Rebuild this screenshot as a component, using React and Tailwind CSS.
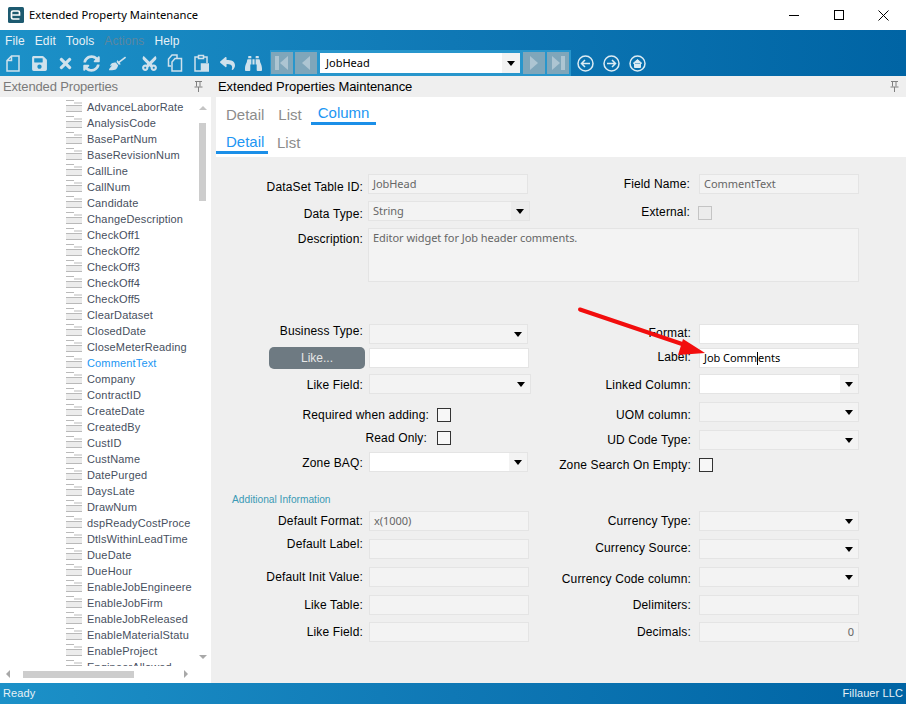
import React from "react";
import { FaSave, FaTimes, FaSyncAlt, FaBroom, FaCut, FaReply, FaBinoculars } from "react-icons/fa";

const TREE_ITEMS = [
  "AdvanceLaborRate", "AnalysisCode", "BasePartNum", "BaseRevisionNum", "CallLine", "CallNum",
  "Candidate", "ChangeDescription", "CheckOff1", "CheckOff2", "CheckOff3", "CheckOff4", "CheckOff5",
  "ClearDataset", "ClosedDate", "CloseMeterReading", "CommentText", "Company", "ContractID",
  "CreateDate", "CreatedBy", "CustID", "CustName", "DatePurged", "DaysLate", "DrawNum",
  "dspReadyCostProce", "DtlsWithinLeadTime", "DueDate", "DueHour", "EnableJobEngineere",
  "EnableJobFirm", "EnableJobReleased", "EnableMaterialStatu", "EnableProject", "EngineerAllowed",
];

const TOOL_TEXT = "font-['Liberation_Sans',Arial,sans-serif]";

function Pin() {
  return (
    <svg width="9" height="11" viewBox="0 0 9 11" fill="none" stroke="#808080" strokeWidth="1">
      <path d="M1 .5h7M2.5 .5v5M6 .5v5M.5 6h8M4.5 6v5" />
    </svg>
  );
}

function NewIcon() {
  return (
    <svg width="14" height="17" viewBox="0 0 14 17" fill="none" stroke="#cfe1ec" strokeWidth="1.5">
      <path d="M5.5 1H13v15H1V5.5zM5.5 1v4.5H1" />
    </svg>
  );
}

function CopyIcon() {
  return (
    <svg width="16" height="18" viewBox="0 0 16 18" fill="none" stroke="#cfe1ec" strokeWidth="1.5">
      <path d="M4 12H1.500V5L5 1h5v3" />
      <path d="M8 4.500h6.500v12.500H5V8z" />
    </svg>
  );
}

function PasteIcon() {
  return (
    <svg width="15" height="18" viewBox="0 0 15 18" fill="none" stroke="#cfe1ec" strokeWidth="1.500">
      <path d="M5 3H1v14h6M10 3h3v6" />
      <path d="M4.500 1.500h5v3h-5z" />
      <path d="M7.500 10h7v7h-7z" fill="#cfe1ec" />
    </svg>
  );
}

function ToolIcon({ children, className = "" }) {
  return <div className={`w-[26px] h-[26px] flex items-center justify-center text-[#cfe1ec] ${className}`}>{children}</div>;
}

function NavButton({ dir, end }) {
  return (
    <div className="w-[22px] h-[22px] bg-[#7fa6ba] flex items-center justify-center">
      <svg width="16" height="16" viewBox="0 0 16 16" fill="#adc5d2">
        {dir === "left" ? (
          <>
            {end && <rect x="1" y="1" width="4" height="14" />}
            <path d={end ? "M14 1v14L6 8z" : "M12 1v14L4 8z"} />
          </>
        ) : (
          <>
            {end && <rect x="11" y="1" width="4" height="14" />}
            <path d={end ? "M2 1v14l8-7z" : "M4 1v14l8-7z"} />
          </>
        )}
      </svg>
    </div>
  );
}

function CircleIcon({ kind }) {
  return (
    <div className="w-[26px] h-[26px] flex items-center justify-center">
      <svg width="17" height="17" viewBox="0 0 17 17" fill="none" stroke="#dcebf3" strokeWidth="1.500">
        <circle cx="8.500" cy="8.500" r="7.500" />
        {kind === "left" && <path d="M13 8.500H4.500M8 5L4.500 8.500 8 12" />}
        {kind === "right" && <path d="M4 8.500h8.500M9 5l3.500 3.500L9 12" />}
        {kind === "home" && <path d="M4 8.500l4.500-4 4.500 4M5.500 8v4.500h6V8" fill="#dcebf3" strokeWidth="1" />}
      </svg>
    </div>
  );
}

function TreeIcon() {
  return (
    <svg width="16" height="12" viewBox="0 0 16 12" className="shrink-0 mb-[2px]">
      <rect x="0" y="5" width="16" height="7" fill="#ececec" />
      <path d="M0 .5h8M8 3h8M0 5.500h16M0 11.500h16" stroke="#b9b9b9" strokeWidth="1" />
    </svg>
  );
}

function Caret() {
  return <span className="inline-block w-0 h-0 border-x-[4px] border-x-transparent border-t-[5px] border-t-black" />;
}

// single line box, used for textboxes and combos
function Box({ value, enabled, combo, btn, right, w = "w-[160px]", className = "", children }) {
  return (
    <div
      className={`${w} h-5 flex items-center border border-[#e4e4e4] ${enabled ? "bg-white text-black" : "bg-[#f3f3f3] text-[#666]"} ${className}`}
    >
      <span className={`flex-1 px-1 font-['Noto_Sans',sans-serif] text-[11px] tracking-[-0.05px] whitespace-nowrap overflow-hidden ${right ? "text-right" : ""}`}>
        {children || value}
      </span>
      {combo && (
        <span className={`w-[18px] h-full flex items-center justify-center ${btn ? (enabled ? "bg-[#f3f3f3]" : "bg-[#ececec]") : ""}`}>
          <Caret />
        </span>
      )}
    </div>
  );
}

function Row({ label, labelW = "w-[147px]", labelClass = "", gap = "ml-[5px]", className = "", control }) {
  return (
    <div className={`flex items-center ${className}`}>
      <div className={`${labelW} h-5 flex items-center justify-end text-[12px] tracking-[0.15px] text-black whitespace-nowrap ${labelClass}`}>{label}</div>
      <div className={gap}>{control}</div>
    </div>
  );
}

function Check({ muted }) {
  return <div className={`w-[14px] h-[14px] border ${muted ? "border-[#c4c4c4] bg-[#ececec]" : "border-[#333] bg-[#f7f7f7]"}`} />;
}

export default function App() {
  return (
    <div className={`w-[906px] h-[704px] relative overflow-hidden flex flex-col bg-[#efefef] ${TOOL_TEXT}`}>
      {/* title bar */}
      <div className="h-[30px] bg-white flex items-center shrink-0">
        <svg width="16" height="16" viewBox="0 0 16 16" className="ml-2 shrink-0">
          <rect width="16" height="16" rx="1.500" fill="#1d5a70" />
          <path d="M4.500 8h7V5.500q0-1.500-1.500-1.500H5q-1.500 0-1.500 1.500v5q0 1.500 1.500 1.500h6.500" fill="none" stroke="#fff" strokeWidth="1.700" />
        </svg>
        <span className="ml-[5px] text-[11.2px] text-black font-['Noto_Sans',sans-serif]">Extended Property Maintenance</span>
        <div className="ml-auto flex">
          <div className="w-[45px] h-[30px] flex items-center justify-center">
            <div className="w-[10px] h-px bg-black" />
          </div>
          <div className="w-[45px] h-[30px] flex items-center justify-center">
            <div className="w-[10px] h-[10px] border border-black" />
          </div>
          <div className="w-[45px] h-[30px] flex items-center justify-center">
            <svg width="11" height="11" viewBox="0 0 11 11" stroke="#000" strokeWidth="1">
              <path d="M.5 .5l10 10M10.500 .5l-10 10" />
            </svg>
          </div>
        </div>
      </div>

      {/* menu + toolbar */}
      <div className="h-[46px] shrink-0 bg-gradient-to-r from-[#1c91c8] via-[#0f78b5] to-[#0064a4]">
        <div className="h-5 pt-[2px] flex items-center gap-[10px] pl-[5px] text-[12px] tracking-[0.1px] text-[#e8f1f6]">
          <span>File</span>
          <span>Edit</span>
          <span>Tools</span>
          <span className="text-[#5b87a1]">Actions</span>
          <span>Help</span>
        </div>
        <div className="h-[26px] flex">
          <ToolIcon><NewIcon /></ToolIcon>
          <ToolIcon><FaSave size={17} /></ToolIcon>
          <ToolIcon><FaTimes size={17} /></ToolIcon>
          <ToolIcon><FaSyncAlt size={17} /></ToolIcon>
          <ToolIcon><FaBroom size={17} /></ToolIcon>
          <ToolIcon className="ml-[6px]"><FaCut size={17} className="-rotate-90" /></ToolIcon>
          <ToolIcon><CopyIcon /></ToolIcon>
          <ToolIcon><PasteIcon /></ToolIcon>
          <ToolIcon><FaReply size={15} /></ToolIcon>
          <ToolIcon><FaBinoculars size={17} /></ToolIcon>
          <div className="ml-1 w-[301px] h-[26px] bg-[#2896cc] flex items-center pl-px gap-[2px]">
            <NavButton dir="left" end />
            <NavButton dir="left" />
            <div className="mx-px w-[200px] h-5 bg-white flex items-center">
              <span className="flex-1 pl-[6px] text-[11px] text-black font-['Noto_Sans',sans-serif]">JobHead</span>
              <span className="w-[18px] h-full bg-[#f2f2f2] flex items-center justify-center">
                <Caret />
              </span>
            </div>
            <NavButton dir="right" />
            <NavButton dir="right" end />
          </div>
          <div className="ml-px flex">
            <CircleIcon kind="left" />
            <CircleIcon kind="right" />
            <CircleIcon kind="home" />
          </div>
        </div>
      </div>

      {/* body */}
      <div className="flex-1 flex min-h-0">
        {/* left panel */}
        <div className="w-[211px] flex flex-col shrink-0">
          <div className="h-[21px] flex items-center justify-between pl-[3px] pr-[8px] text-[13px] tracking-[-0.15px] text-[#7a7a7a] shrink-0">
            <span>Extended Properties</span>
            <Pin />
          </div>
          <div className="flex-1 bg-white relative min-h-0">
            <div className="h-[569px] overflow-hidden pt-[2px] pl-[66px]">
              {TREE_ITEMS.map((item) => (
                <div key={item} className="h-4 flex items-center">
                  <TreeIcon />
                  <span
                    className={`ml-[5px] whitespace-nowrap text-[11px] tracking-[0.15px] ${
                      item === "CommentText" ? "text-[#2196f3]" : "text-[#474f5e]"
                    }`}
                  >
                    {item}
                  </span>
                </div>
              ))}
            </div>
            {/* scrollbars */}
            <div className="absolute left-[199px] top-[26px] w-[7px] h-[78px] bg-[#cdcdcd]" />
            <div className="absolute left-[199px] top-[9px] w-0 h-0 border-x-[4px] border-x-transparent border-b-[4px] border-b-[#c4c4c4]" />
            <div className="absolute left-[199px] top-[558px] w-0 h-0 border-x-[4px] border-x-transparent border-t-[4px] border-t-[#a8a8a8]" />
            <div className="absolute left-[23px] top-[574px] w-[111px] h-[7px] bg-[#cdcdcd]" />
            <div className="absolute left-[6px] top-[573px] w-0 h-0 border-y-[4px] border-y-transparent border-r-[4px] border-r-[#a8a8a8]" />
            <div className="absolute left-[184px] top-[573px] w-0 h-0 border-y-[4px] border-y-transparent border-l-[4px] border-l-[#a8a8a8]" />
          </div>
        </div>

        {/* right panel */}
        <div className="ml-[5px] flex-1 flex flex-col min-w-0">
          <div className="h-[21px] flex items-center justify-between pl-[2px] pr-[7px] text-[13px] tracking-[-0.05px] text-black shrink-0">
            <span>Extended Properties Maintenance</span>
            <Pin />
          </div>
          <div className="h-[60px] bg-white shrink-0 text-[15px] text-[#8c8c8c]">
            <div className="h-[30px] flex items-start">
              <span className="ml-[10px] mt-[7px]">Detail</span>
              <span className="ml-[14px] mt-[7px]">List</span>
              <span className="ml-[9px] h-[28px] px-[7px] pt-[5px] border-b-[3px] border-[#1b8fe8] text-[#2196f3]">Column</span>
            </div>
            <div className="h-[30px] flex items-start">
              <span className="h-[27px] w-[52px] pl-[10px] pt-[4px] border-b-[3px] border-[#1b8fe8] text-[#2196f3]">Detail</span>
              <span className="ml-[9px] mt-[5px]">List</span>
            </div>
          </div>

          {/* form */}
          <div className="flex-1 min-h-0">
            <div className="flex pt-[17px]">
              <div className="w-[344px]">
                <Row label="DataSet Table ID:" labelClass="pt-[5px]" control={<Box value="JobHead" />} />
                <Row label="Data Type:" labelClass="pt-[5px]" className="mt-[7px]" control={<Box value="String" combo btn w="w-[162px]" />} />
              </div>
              <div>
                <Row label="Field Name:" labelW="w-[130px]" gap="ml-[9px]" control={<Box value="CommentText" />} />
                <Row label="External:" labelW="w-[130px]" gap="ml-[8px]" className="mt-[7px]" labelClass="pt-[2px]" control={<div className="pt-[4px]"><Check muted /></div>} />
              </div>
            </div>
            <Row
              label="Description:"
              className="mt-[7px] !items-start"
              labelClass="pt-[2px]"
              control={
                <div className="w-[491px] h-[54px] border border-[#e4e4e4] bg-[#f3f3f3] px-1 pt-px text-[11px] tracking-[-0.05px] text-[#666] font-['Noto_Sans',sans-serif]">
                  Editor widget for Job header comments.
                </div>
              }
            />

            <div className="flex mt-[42px]">
              <div className="w-[344px]">
                <Row label="Business Type:" labelClass="pb-[6px]" gap="ml-[6px]" control={<Box combo w="w-[159px]" />} />
                <div className="flex items-center mt-[3px]">
                  <button className="ml-[53px] w-[96px] h-[22px] rounded-[5px] bg-[#6e7a82] text-[12px] text-[#e6e6e6]">Like...</button>
                  <Box enabled className="ml-1" />
                </div>
                <Row label="Like Field:" gap="ml-[6px]" labelClass="pt-[2px]" className="mt-[5px]" control={<Box combo w="w-[162px]" />} />
                <Row label="Required when adding:" labelW="w-[213px]" gap="ml-[8px]" className="mt-[11px] h-5" control={<Check />} />
                <Row label="Read Only:" labelW="w-[211px]" gap="ml-[10px]" className="mt-[3px] h-5" control={<Check />} />
                <Row label="Zone BAQ:" gap="ml-[6px]" labelClass="pt-[2px]" className="mt-[4px]" control={<Box enabled combo btn w="w-[159px]" />} />
              </div>
              <div>
                <Row label="Format:" labelW="w-[131px]" gap="ml-[8px]" labelClass="pb-[2px]" control={<Box enabled />} />
                <Row label="Label:" labelW="w-[131px]" gap="ml-[8px]" labelClass="pb-[2px]" className="mt-[4px]" control={
                  <Box enabled>Job Comm<span className="inline-block w-0 h-[13px] border-l border-black align-middle" />ents</Box>
                } />
                <Row label="Linked Column:" labelW="w-[131px]" gap="ml-[8px]" labelClass="pt-[2px]" className="mt-[6px]" control={<Box enabled combo btn />} />
                <Row label="UOM column:" labelW="w-[131px]" gap="ml-[8px]" labelClass="pt-[6px]" className="mt-[8px]" control={<Box combo />} />
                <Row label="UD Code Type:" labelW="w-[131px]" gap="ml-[8px]" className="mt-[8px]" control={<Box combo />} />
                <Row label="Zone Search On Empty:" labelW="w-[131px]" gap="ml-[8px]" className="mt-[5px]" control={<Check />} />
              </div>
            </div>

            <div className="mt-[18px] ml-[16px] h-[14px] flex items-center text-[10.2px] text-[#3a9ab5]">Additional Information</div>
            <div className="flex mt-[4px]">
              <div className="w-[344px]">
                <Row label="Default Format:" gap="ml-[6px]" control={<Box value="x(1000)" />} />
                <Row label="Default Label:" gap="ml-[6px]" labelClass="pb-[11px]" className="mt-[8px]" control={<Box />} />
                <Row label="Default Init Value:" gap="ml-[6px]" className="mt-[8px]" control={<Box />} />
                <Row label="Like Table:" gap="ml-[6px]" className="mt-[8px]" control={<Box />} />
                <Row label="Like Field:" gap="ml-[6px]" className="mt-[7px]" control={<Box />} />
              </div>
              <div>
                <Row label="Currency Type:" labelW="w-[131px]" gap="ml-[8px]" control={<Box combo />} />
                <Row label="Currency Source:" labelW="w-[131px]" gap="ml-[8px]" labelClass="pb-[2px]" className="mt-[8px]" control={<Box combo />} />
                <Row label="Currency Code column:" labelW="w-[131px]" gap="ml-[8px]" labelClass="pt-[4px]" className="mt-[8px]" control={<Box combo />} />
                <Row label="Delimiters:" labelW="w-[131px]" gap="ml-[8px]" className="mt-[8px]" control={<Box />} />
                <Row label="Decimals:" labelW="w-[131px]" gap="ml-[8px]" className="mt-[7px]" control={<Box value="0" right />} />
              </div>
            </div>
          </div>
        </div>
      </div>

      {/* status bar */}
      <div className="h-[21px] shrink-0 bg-gradient-to-r from-[#1c91c8] via-[#0f78b5] to-[#0064a4] flex items-center justify-between px-[3px] text-[11px] tracking-[0.1px] text-[#e8f1f6]">
        <span>Ready</span>
        <span>Fillauer LLC</span>
      </div>

      {/* red annotation arrow */}
      <svg className="absolute left-[570px] top-[300px] pointer-events-none" width="145" height="65" viewBox="0 0 145 65">
        <path d="M10 9.500L118 46" stroke="#f20d0d" strokeWidth="4" strokeLinecap="round" />
        <path d="M135 53L113 39 108 55z" fill="#f20d0d" />
      </svg>
    </div>
  );
}
